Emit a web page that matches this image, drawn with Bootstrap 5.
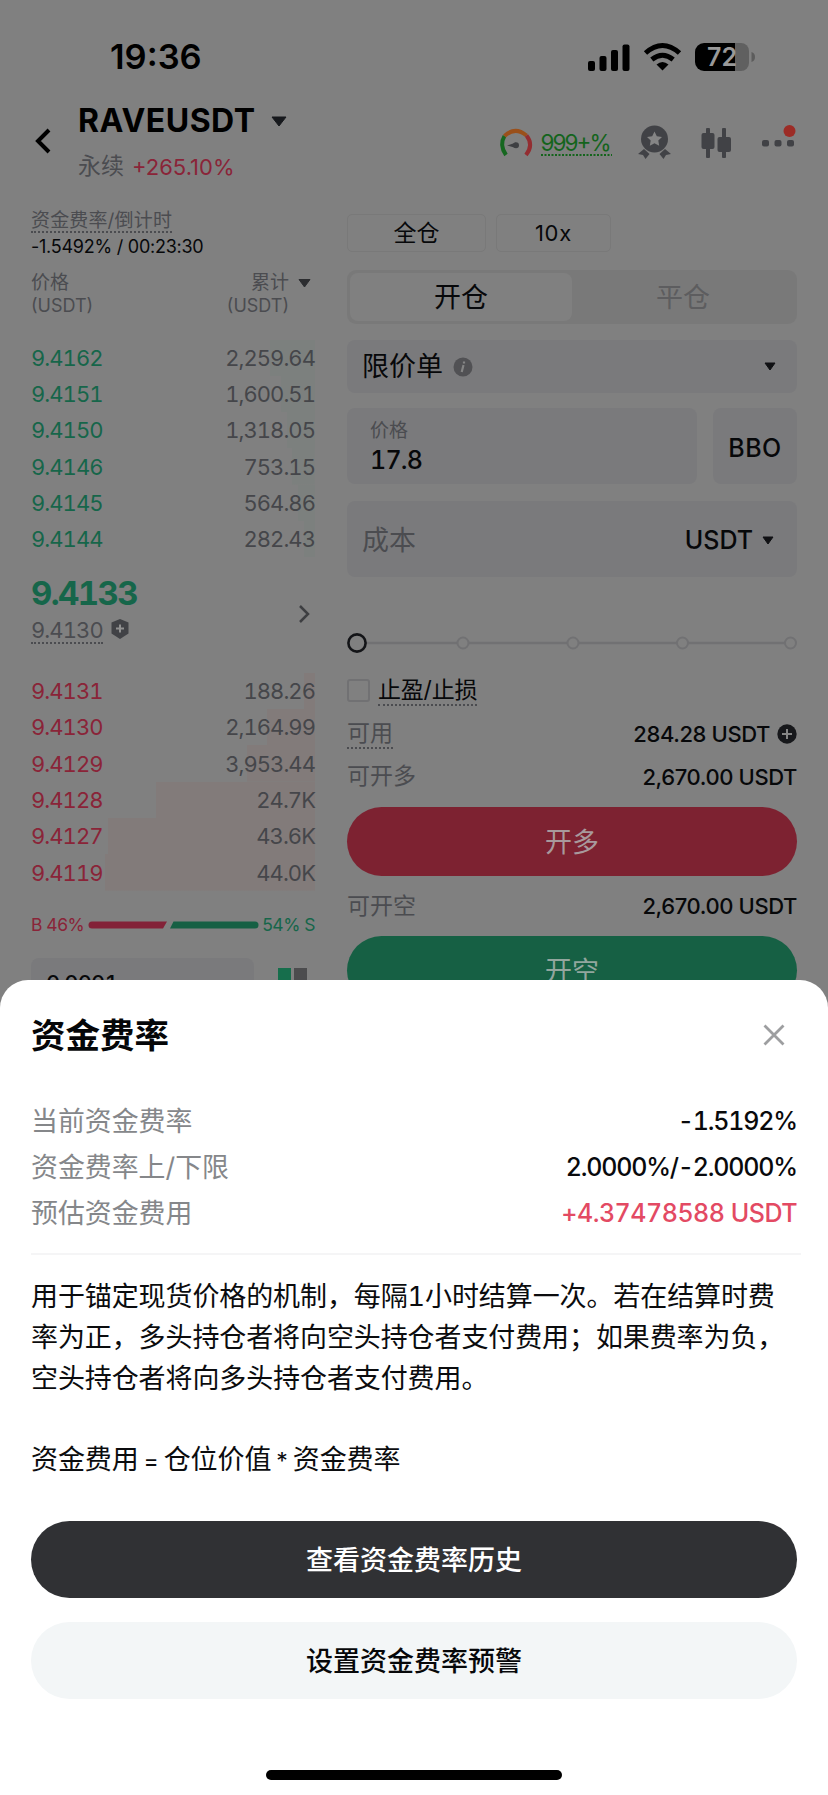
<!DOCTYPE html>
<html lang="zh-CN">
<head>
<meta charset="utf-8">
<meta name="viewport" content="width=device-width, initial-scale=1">
<title>RAVEUSDT 资金费率</title>
<link href="https://cdn.jsdelivr.net/npm/bootstrap@5.3.0/dist/css/bootstrap.min.css" rel="stylesheet">
<style>
body{font-family:Inter,"Noto Sans CJK SC",sans-serif;font-size:23px;line-height:1;color:#07080a;background:#808080}
.screen{width:828px;height:1795px;overflow:hidden;background:#808080}
svg{display:block;flex:none}
.num{font-feature-settings:"tnum"}
.statusbar{height:98px;padding:16px 73px 0 110px}
.clock{font-size:34.5px;font-weight:600;color:#000}
.topbar{height:106px;padding:0 34px 0 34px}
.pair{font-size:32px;font-weight:700;letter-spacing:.5px;color:#000;height:46px;margin-bottom:11px}
.dim{color:#4b4c50}
.up{color:#8a2438}
.dotted{border-bottom:2px dotted #4b4c50}
.trade{height:800px;padding:0 31px}
.book{width:284px}
.book>*{flex:none}
.fs19{font-size:19px}
.fs18{font-size:18px}
.level{height:36.3px;font-size:22px;color:#45464a;letter-spacing:-.95px}
.green{color:#16664a!important}
.last{font-size:33px;font-weight:700;height:47px;letter-spacing:-1.6px}
.share{font-size:17.5px;height:24px;letter-spacing:-.5px}
.field{background:#7a7a7c;border-radius:8px}
.form{width:450px}
.pill{height:38px;border:1px solid #797979;border-radius:5px;font-size:23px}
.seg{height:54px;background:#797979;border-radius:9px;padding:3px;font-size:27px}
.seg>div{flex:1 1 0}
.seg .on{background:#808080;border-radius:8px}
.seg .off{color:#5d5d5f}
.fs27{font-size:27px}
.val{font-size:25px;font-weight:500}
.tick{width:23px;height:23px;border:2px solid #717173;border-radius:3px}
.line{height:43px;font-size:23px}
.amt{font-size:22px;font-weight:500;letter-spacing:-.4px}
.act{height:69px;border-radius:35px;font-size:27px;color:#a8999c;border:0;padding:1px 0 0}
.act.long{background:#7d2231}
.act.short{background:#166044;color:#92a69e}
.sheet{left:0;top:980px;width:828px;height:815px;background:#fff;border-radius:28px 28px 0 0;padding:0 31px}
.sheet h1{font-size:34.5px;font-weight:700;color:#050608}
.info{height:46px;font-size:26.9px;color:#85878a}
.info b{font-weight:500;font-size:25px;color:#090a0c;letter-spacing:-1.2px}
.info b.fee{color:#e34a63;letter-spacing:-.5px}
.copy{font-size:27px;line-height:40.8px;color:#0b0c0e;letter-spacing:-.1px}
.formula{word-spacing:-2.5px}
.formula span{font-size:23px}
.rule{height:2px;background:#f5f5f6;margin-right:-4px}
.big{height:77px;border-radius:39px;border:0;font-size:27px;font-weight:500;padding:1px 0 0}
.big.dark{background:#303134;color:#fff}
.big.light{background:#f3f6f7;color:#07080a}
.home{width:296px;height:10px;border-radius:5px;background:#000}
</style>
</head>
<body>
<div class="screen position-relative">
  <div class="statusbar d-flex justify-content-between align-items-center">
    <div class="clock">19:36</div>
    <svg width="168" height="30" viewBox="0 0 168 30">
      <rect x="1" y="19" width="7" height="10" rx="2"/><rect x="12.500" y="14" width="7" height="15" rx="2"/><rect x="24" y="8" width="7" height="21" rx="2"/><rect x="35.500" y="2.500" width="7" height="26.500" rx="2"/>
      <g fill="none" stroke="#000" stroke-width="5"><path d="M58.500 11Q75.500-4 92.500 11"/><path d="M64.800 17.500Q75.500 9 86.200 17.500"/></g>
      <path d="M75.500 28.500L69.500 22.500Q75.500 17.500 81.500 22.500Z"/>
      <path d="M148 1H117a9 9 0 0 0-9 9V20a9 9 0 0 0 9 9H148Z"/>
      <path d="M148 1H154a8 8 0 0 1 8 8V21a8 8 0 0 1-8 8H148Z" fill="#606060"/>
      <path d="M164.500 10q3.500 1 3.500 5t-3.500 5Z" fill="#5c5c5c"/>
      <text x="135" y="23.500" text-anchor="middle" font-size="25" font-weight="600" fill="#999">72</text>
    </svg>
  </div>

  <div class="topbar d-flex align-items-start">
    <svg class="mt-4" width="44" height="40" viewBox="0 0 44 40"><path d="M15 8L4 19L15 30" fill="none" stroke="#000" stroke-width="4"/></svg>
    <div>
      <div class="pair d-flex align-items-center" style="gap:15px">RAVEUSDT<svg width="16" height="11" viewBox="0 0 16 11"><path d="M1 1H15L8 10Z" fill="#17191d" stroke="#17191d"/></svg></div>
      <div class="d-flex align-items-center dim"><span>永续</span><span class="up ms-2" style="font-size:22px">+265.10%</span></div>
    </div>
    <div class="ms-auto d-flex pt-4">
      <svg width="295" height="40" viewBox="499 122 295 40" style="overflow:visible">
        <g fill="none" stroke-width="4"><path d="M506 155Q499 145 504.500 136" stroke="#166720"/><path d="M504.500 136Q515 126 526.500 135.500" stroke="#9a501b"/><path d="M526.500 135.500Q534 145 526 155" stroke="#932d31"/></g>
        <path d="M507 145.500L516 142.500V148Z" fill="#3e3f42"/><circle cx="516" cy="145.300" r="3" fill="#3e3f42"/>
        <text x="540.500" y="151" font-size="22.500" fill="#14641c" textLength="71">999+%</text>
        <path d="M541 155H612" stroke="#14641c" stroke-width="2" stroke-dasharray="2 1.500"/>
        <g fill="#414246"><circle cx="654.500" cy="139" r="13.500"/><path d="M644 149l5.500 5-4 5-2.500-4-5-1ZM665 149l-5.500 5 4 5 2.500-4 5-1Z"/></g>
        <path d="M654.500 131.500l2.300 4.700 5.200.8-3.700 3.600.9 5.200-4.700-2.500-4.700 2.500.9-5.200-3.700-3.600 5.200-.8Z" fill="#858585"/>
        <g fill="#414246"><rect x="706" y="128" width="4" height="30" rx="1"/><rect x="701.500" y="133" width="13" height="16" rx="2"/><rect x="722" y="128" width="4" height="30" rx="1"/><rect x="717.500" y="137" width="13.500" height="15" rx="2"/><rect x="762" y="140" width="7" height="6.500" rx="2"/><rect x="774.500" y="140" width="7" height="6.500" rx="2"/><rect x="787" y="140" width="7" height="6.500" rx="2"/></g>
        <circle cx="789.500" cy="131" r="6" fill="#9c2c26"/>
      </svg>
    </div>
  </div>

  <div class="trade d-flex justify-content-between">
    <div class="book d-flex flex-column">
      <div class="fs19 dim d-flex" style="height:32px;padding-top:7px"><span class="dotted" style="height:22px;letter-spacing:.15px">资金费率/倒计时</span></div>
      <div class="fs18" style="height:32px;padding-top:2px;letter-spacing:-.25px">-1.5492% / 00:23:30</div>
      <div class="d-flex justify-content-between dim fs19" style="height:71.5px;padding-top:5px">
        <div><div style="height:24px">价格</div><div class="fs18">(USDT)</div></div>
        <div class="d-flex"><div class="text-end"><div style="height:24px">累计</div><div class="fs18">(USDT)</div></div><svg class="mt-1" style="margin-left:6px" width="20" height="14" viewBox="0 0 20 14"><path d="M4 2.500H15L9.500 10Z" fill="#2c2d30" stroke="#2c2d30"/></svg></div>
      </div>
      <div class="num" id="asks"></div>
      <div class="d-flex justify-content-between" style="height:115.6px;padding-top:13px">
        <div><div class="last green num d-flex align-items-center">9.4133</div>
          <div class="d-flex gap-2 dim" style="font-size:22px;padding-top:2px"><span class="dotted num" style="height:25px;letter-spacing:-.9px">9.4130</span><svg width="18" height="20" viewBox="0 0 18 20"><path d="M9 0l8.500 3.500v11L9 20 .5 14.500v-11Z" fill="#414246"/><path d="M9 5.500v8M5 9.500h8" stroke="#909090" stroke-width="2"/></svg></div></div>
        <svg style="margin-top:33px" width="20" height="22" viewBox="0 0 20 22"><path d="M5 3l8 8-8 8" fill="none" stroke="#3d3e41" stroke-width="2.500"/></svg>
      </div>
      <div class="num" id="bids"></div>
      <div class="share d-flex align-items-center" style="margin-top:22px"><span class="up">B 46%</span><svg class="mx-auto" width="171" height="8" viewBox="0 0 171 8"><path d="M4 .5H79L75 7.500H4A3.500 3.500 0 0 1 4 .5Z" fill="#832238"/><path d="M85.500.5H167A3.500 3.500 0 0 1 167 7.500H82Z" fill="#166044"/></svg><span class="green">54% S</span></div>
      <div class="d-flex" style="margin-top:21px">
        <div class="field d-flex justify-content-between" style="width:223px;height:60px;padding:14px 20px 0 15px;font-weight:500;font-size:22px"><span class="num" style="letter-spacing:-.9px">0.0001</span><svg style="margin-top:7px" width="12" height="9" viewBox="0 0 12 9"><path d="M0 1H12L6 9Z" fill="#17191d"/></svg></div>
        <svg style="margin:10px 0 0 24px" width="30" height="30"><path d="M0 0H13V30H0Z" fill="#166e4c"/><path d="M16 0H29V13H16Z" fill="#4c4c4e"/></svg>
      </div>
    </div>

    <div class="form">
      <div class="d-flex" style="gap:10px;padding-top:10px"><div class="pill d-flex align-items-center justify-content-center" style="width:139px">全仓</div><div class="pill d-flex align-items-center justify-content-center" style="width:115px;font-size:22px;letter-spacing:.8px">10x</div></div>
      <div class="seg d-flex" style="margin-top:18px"><div class="on d-flex align-items-center justify-content-center">开仓</div><div class="off d-flex align-items-center justify-content-center">平仓</div></div>
      <div class="field d-flex align-items-center fs27" style="height:53px;margin-top:16px;padding:0 21px 0 15px">限价单<svg style="margin-left:6px" width="24" height="20" viewBox="0 0 24 20"><circle cx="14" cy="10" r="9.500" fill="#515154"/><path d="M14.500 8l-1.800 7M15 4.500v2" stroke="#858585" stroke-width="2.200"/></svg><svg class="ms-auto" width="12" height="9" viewBox="0 0 12 9"><path d="M1 1H11L6 8Z" fill="#101114" stroke="#101114"/></svg></div>
      <div class="d-flex" style="gap:16px;margin-top:15px">
        <div class="field" style="width:350px;height:76px;padding:13px 23px"><div class="fs19 dim" style="height:27px">价格</div><div class="val num" style="letter-spacing:-.8px">17.8</div></div>
        <div class="field val d-flex align-items-center justify-content-center flex-fill" style="padding-top:4px;letter-spacing:.5px">BBO</div>
      </div>
      <div class="field d-flex align-items-center" style="height:76px;margin-top:17px;padding:2px 23px 0 15px"><span class="fs27 dim">成本</span><span class="val ms-auto">USDT</span><svg style="margin-left:9px" width="12" height="9" viewBox="0 0 12 9"><path d="M1 1H11L6 8Z" fill="#101114" stroke="#101114"/></svg></div>
      <svg style="margin-top:56px" width="450" height="20" viewBox="0 0 450 20"><path d="M18 10H440" stroke="#717173" stroke-width="2.500"/><g fill="#808080" stroke="#717173" stroke-width="2"><circle cx="116" cy="10" r="5.500"/><circle cx="226" cy="10" r="5.500"/><circle cx="335.500" cy="10" r="5.500"/><circle cx="443.500" cy="10" r="5.500"/></g><circle cx="10" cy="10" r="8.600" fill="#808080" stroke="#131417" stroke-width="2.600"/></svg>
      <div class="d-flex align-items-center" style="height:42px;margin-top:16px;gap:8px"><span class="tick"></span><span class="dotted" style="height:27px;margin-top:4px;letter-spacing:-.2px">止盈/止损</span></div>
      <div class="line d-flex align-items-center justify-content-between" style="margin-top:1px"><span class="dotted dim" style="height:27px;margin-top:4px">可用</span><span class="amt d-flex align-items-center" style="gap:7px">284.28 USDT<svg width="20" height="20" viewBox="0 0 20 20"><circle cx="10" cy="10" r="9.700" fill="#17181b"/><path d="M10 5v10M5 10h10" stroke="#858585" stroke-width="2"/></svg></span></div>
      <div class="line d-flex align-items-center justify-content-between"><span class="dim">可开多</span><span class="amt">2,670.00 USDT</span></div>
      <button class="act long d-block w-100" style="margin-top:9px">开多</button>
      <div class="line d-flex align-items-center justify-content-between" style="height:60px"><span class="dim">可开空</span><span class="amt">2,670.00 USDT</span></div>
      <button class="act short d-block w-100">开空</button>
    </div>
  </div>

  <section class="sheet position-absolute">
    <div class="d-flex justify-content-between align-items-center" style="height:112px;padding-right:12px"><h1 class="m-0">资金费率</h1><svg style="margin-bottom:3px" width="22" height="22" viewBox="0 0 22 22"><path d="M1.500 1.500l19 19M20.500 1.500l-19 19" stroke="#9d9ea0" stroke-width="2.800"/></svg></div>
    <div style="padding-top:6px">
      <div class="info d-flex align-items-center justify-content-between">当前资金费率<b class="num">-1.5192%</b></div>
      <div class="info d-flex align-items-center justify-content-between">资金费率上/下限<b class="num">2.0000%/-2.0000%</b></div>
      <div class="info d-flex align-items-center justify-content-between">预估资金费用<b class="fee num">+4.37478588 USDT</b></div>
    </div>
    <div class="rule" style="margin-top:17px"></div>
    <div class="copy" style="padding-top:22px;height:266px">用于锚定现货价格的机制，每隔<span class="num">1</span>小时结算一次。若在结算时费<br>率为正，多头持仓者将向空头持仓者支付费用；如果费率为负，<br>空头持仓者将向多头持仓者支付费用。<br><br><div class="formula">资金费用 <span>=</span> 仓位价值 <span>*</span> 资金费率</div></div>
    <button class="big dark d-block w-100">查看资金费率历史</button>
    <button class="big light d-block w-100" style="margin-top:24px">设置资金费率预警</button>
    <div class="home mx-auto" style="margin-top:71px"></div>
  </section>
</div>
<script src="https://cdn.jsdelivr.net/npm/bootstrap@5.3.0/dist/js/bootstrap.bundle.min.js"></script>
<script>
// Order book levels: price, cumulative amount, depth in percent of the column
function levels(id, rows, cls, tint){
  document.getElementById(id).innerHTML = rows.map(function(r){
    return '<div class="level d-flex align-items-center justify-content-between" style="background:linear-gradient('+tint+','+tint+') right/'+r[2]+'% 100% no-repeat"><span class="'+cls+'">'+r[0]+'</span><span>'+r[1]+'</span></div>';
  }).join('');
}
levels('asks',[['9.4162','2,259.64',16],['9.4151','1,600.51',12],['9.4150','1,318.05',10],['9.4146','753.15',8],['9.4145','564.86',6],['9.4144','282.43',4]],'green','#7c807e');
levels('bids',[['9.4131','188.26',4],['9.4130','2,164.99',17],['9.4129','3,953.44',24],['9.4128','24.7K',56],['9.4127','43.6K',73],['9.4119','44.0K',74]],'up','#827b7a');
</script>
</body>
</html>
